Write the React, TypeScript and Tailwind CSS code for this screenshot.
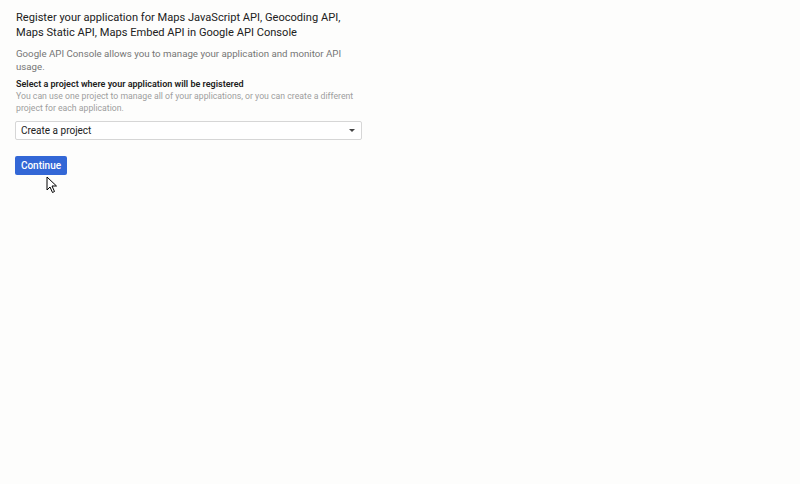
import React from 'react'

const Cursor = () => (
  <svg width="12" height="18" viewBox="0 0 12 18" className="absolute left-[46px] top-[176px]">
    <path d="M1 1 L1 14 L4 11 L6.5 16.5 L8.5 15.5 L6 10 L10.5 10 Z" fill="#fff" stroke="#000" strokeWidth="1" strokeLinejoin="round" />
  </svg>
)

const App = () => {
  return (
    <div className="relative w-[800px] h-[484px] bg-[#fdfdfc] font-['Roboto',sans-serif] overflow-hidden">
      <div className="pt-[10px] pl-[16px]">
        <h1 className="w-[340px] text-[11.1px] leading-[15px] text-[#212121]">
          Register your application for Maps JavaScript API, Geocoding API, Maps Static API, Maps Embed API in Google API Console
        </h1>
        <p className="mt-[7px] w-[336px] text-[9.7px] leading-[13px] text-[#757575]">
          Google API Console allows you to manage your application and monitor API usage.
        </p>

        <div className="mt-[5px] w-[345px]">
          <div className="text-[9px] leading-[12px] font-semibold text-[#212121]">
            Select a project where your application will be registered
          </div>
          <div className="text-[8.7px] leading-[12px] text-[#9e9e9e]">
            You can use one project to manage all of your applications, or you can create a different project for each application.
          </div>
        </div>

        <div className="mt-[7px] w-[347px] h-[19px] -ml-px border border-[#d6d6d6] rounded-[2px] bg-white flex items-center justify-between pl-[5px] pr-[6px]">
          <span className="text-[10px] text-[#212121]">Create a project</span>
          <span className="w-0 h-0 border-l-[3px] border-r-[3px] border-t-[3px] border-l-transparent border-r-transparent border-t-[#444]" />
        </div>

        <button className="mt-[16px] -ml-px w-[52px] h-[19px] rounded-[2px] bg-[#3367d6] text-white text-[10px] font-medium flex items-center justify-center">
          Continue
        </button>
      </div>
      <Cursor />
    </div>
  )
}

export default App
